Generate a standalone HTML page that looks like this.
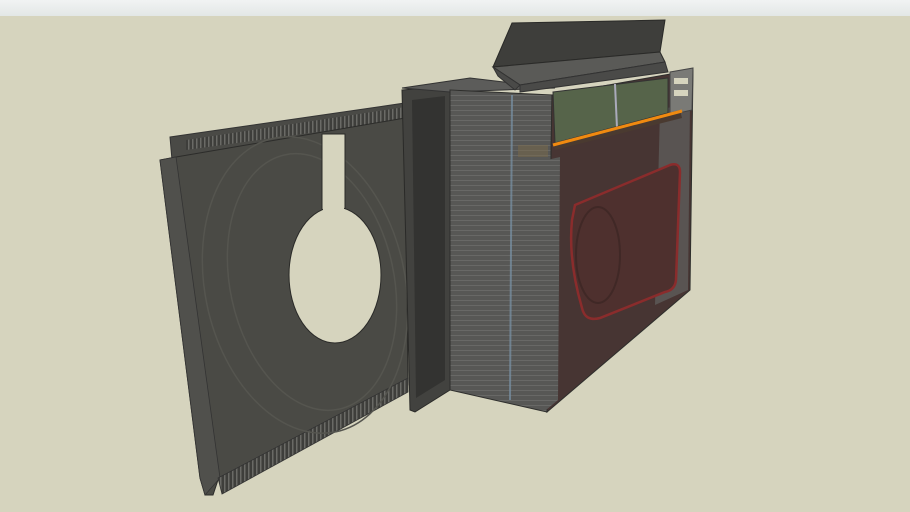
<!DOCTYPE html>
<html><head><meta charset="utf-8"><style>
html,body{margin:0;padding:0;width:910px;height:512px;overflow:hidden;background:#d6d4be;}
.top{position:absolute;left:0;top:0;width:910px;height:16px;background:linear-gradient(#f1f3f3,#e3e7e6);}
svg{position:absolute;left:0;top:0}
</style></head><body>
<div class="top"></div>
<svg width="910" height="512" viewBox="0 0 910 512">
<defs>
<pattern id="fins" width="4" height="10" patternUnits="userSpaceOnUse"><rect width="4" height="10" fill="#3e3e3b"/><rect width="1.5" height="10" fill="#6a6a66"/></pattern>
<pattern id="stripe" width="10" height="5" patternUnits="userSpaceOnUse"><rect width="10" height="5" fill="#575755"/><rect width="10" height="1" fill="#686866"/></pattern>
</defs>
<polygon points="170,137 405,103 405,122 172,160" fill="#4a4a46" stroke="#333" stroke-width="1"/>
<polygon points="186,140 405,107 405,120 186,150" fill="url(#fins)"/>
<polygon points="160,160 176,157 405,118 408,385 218,480 213,495 205,495 200,478" fill="#4a4a45" stroke="#2c2c2a" stroke-width="1"/>
<polygon points="160,160 176,157 220,478 205,495 200,478" fill="#50504c" stroke="#333" stroke-width="0.8"/>
<polygon points="218,478 408,378 408,392 222,494" fill="url(#fins)" stroke="#333" stroke-width="0.8"/>
<ellipse cx="305" cy="285" rx="100" ry="150" fill="none" stroke="#55554f" stroke-width="1.5" transform="rotate(-12 305 285)"/>
<ellipse cx="312" cy="282" rx="82" ry="130" fill="none" stroke="#55554f" stroke-width="1.5" transform="rotate(-12 312 282)"/>
<rect x="322" y="134" width="23" height="80" fill="#d6d4be" stroke="#2a2a28"/>
<ellipse cx="335" cy="275" rx="46" ry="68" fill="#d6d4be" stroke="#2a2a28"/>
<rect x="323" y="200" width="21" height="20" fill="#d6d4be"/>
<polygon points="402,90 450,86 450,390 415,412 410,410" fill="#42423f" stroke="#2a2a28"/>
<polygon points="412,100 445,96 445,380 416,398" fill="#333331"/>
<polygon points="402,88 470,78 555,88 450,92" fill="#5c5c5a" stroke="#333"/>
<polygon points="450,90 552,95 547,412 450,390" fill="url(#stripe)" stroke="#2e2e2c"/>
<line x1="512" y1="95" x2="510" y2="400" stroke="#7a93a8" stroke-width="2" opacity="0.7"/>
<rect x="518" y="145" width="30" height="12" fill="#7a6a4a" opacity="0.5"/>
<polygon points="552,95 693,70 690,290 547,412" fill="#473533" stroke="#2e2e2c"/>
<polygon points="660,110 690,102 688,290 655,305" fill="#5e5c5a" opacity="0.8"/>
<polygon points="547,160 560,157 558,400 546,410" fill="url(#stripe)"/>
<polygon points="670,72 693,68 692,110 670,115" fill="#7a7a76" stroke="#444"/>
<rect x="674" y="78" width="14" height="6" fill="#d6d4be"/><rect x="674" y="90" width="14" height="6" fill="#d6d4be"/>
<path d="M575,205 L670,165 Q680,162 680,172 L676,280 Q675,290 665,292 L600,318 Q585,322 582,308 Q568,260 572,220 Z" fill="#4e302e" stroke="#8a2c2c" stroke-width="2.5"/>
<ellipse cx="598" cy="255" rx="22" ry="48" fill="none" stroke="#402826" stroke-width="2"/>
<polygon points="553,92 668,78 668,113 555,143" fill="#56644a" stroke="#333"/>
<line x1="615" y1="84" x2="617" y2="128" stroke="#aab" stroke-width="2"/>
<polygon points="553,143 680,110 682,118 555,150" fill="#4a3a30"/>
<line x1="553" y1="145" x2="682" y2="111" stroke="#f08a10" stroke-width="3"/>
<polygon points="493,67 512,23 665,20 660,52" fill="#3e3e3b" stroke="#2a2a28"/>
<polygon points="493,67 660,52 665,62 520,85" fill="#5a5a57" stroke="#2a2a28"/>
<polygon points="493,67 520,85 515,90 498,76" fill="#4a4a48" stroke="#333"/>
<polygon points="520,85 665,62 668,72 520,92" fill="#4a4a48" stroke="#333"/>
</svg>
</body></html>
